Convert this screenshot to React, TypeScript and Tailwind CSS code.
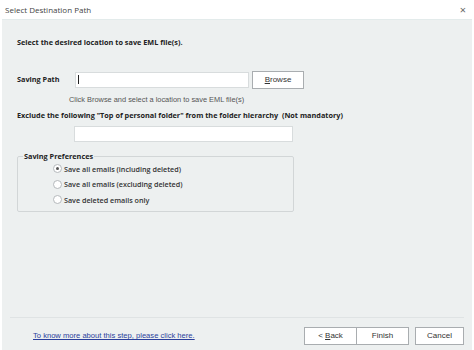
const RADIOS = [
  { label: "Save all emails (including deleted)", checked: true },
  { label: "Save all emails (excluding deleted)", checked: false },
  { label: "Save deleted emails only", checked: false },
];

const Radio = ({ checked }: { checked: boolean }) => (
  <span className="flex h-[9px] w-[9px] items-center justify-center rounded-full border border-[#b5b9bc] bg-white">
    {checked && <span className="h-[3px] w-[3px] rounded-full bg-[#555]" />}
  </span>
);

const Btn = ({ children, className = "" }: { children: React.ReactNode; className?: string }) => (
  <button
    className={`flex h-[18px] items-center justify-center border border-[#a9adb0] bg-white font-['Liberation_Sans',sans-serif] text-[8px] text-[#333] ${className}`}
  >
    {children}
  </button>
);

export default function App() {
  return (
    <div className="flex h-[350px] w-[474px] flex-col bg-white font-['Open_Sans',sans-serif] text-[#222]">
      <div className="flex h-[19px] items-center justify-between pl-[5px] pr-[8px]">
        <span className="text-[8px] text-[#444]">Select Destination Path</span>
        <span className="text-[11px] leading-none text-[#666]">×</span>
      </div>
      <div className="mx-[2px] flex flex-1 flex-col border-t border-[#e3ebeb] bg-[#edf0f0] px-[8px] pb-[5px]">
        <div className="flex flex-col pl-[7px]">
          <p className="mt-[17px] text-[7.3px] font-bold">Select the desired location to save EML file(s).</p>

          <div className="mt-[23px] flex items-center">
            <span className="w-[58px] text-[7.3px] font-bold">Saving Path</span>
            <div className="flex h-[16px] w-[174px] items-center border border-[#d8dcdd] bg-white pl-[2px]">
              <span className="h-[9px] w-px bg-[#222]" />
            </div>
            <Btn className="ml-[3px] w-[52px]">
              <span><span className="underline">B</span>rowse</span>
            </Btn>
          </div>
          <p className="mt-[5px] pl-[52px] font-['Liberation_Sans',sans-serif] text-[7.4px] text-[#555]">
            Click Browse and select a location to save EML file(s)
          </p>
          <p className="mt-[5px] text-[7.3px] font-bold">
            Exclude the following "Top of personal folder" from the folder hierarchy&nbsp; (Not mandatory)
          </p>
          <div className="ml-[57px] mt-[5px] h-[16px] w-[219px] border border-[#d8dcdd] bg-white" />

          <fieldset className="mt-[9px] h-[61px] w-[277px] rounded-[2px] border border-[#d2d6d7] px-[5px]">
            <legend className="px-[1px] text-[7.3px] font-bold">Saving Preferences</legend>
            <div className="flex flex-col gap-[5.5px] pl-[30px] pt-[2px]">
              {RADIOS.map((r) => (
                <label key={r.label} className="flex items-center gap-[2px] text-[7.2px] leading-[10px] font-semibold text-[#333]">
                  <Radio checked={r.checked} />
                  {r.label}
                </label>
              ))}
            </div>
          </fieldset>
        </div>

        <div className="mt-auto border-t border-[#dfe3e4]" />
        <div className="flex items-center pt-[9px]">
          <a className="ml-[23px] font-['Liberation_Sans',sans-serif] text-[7.6px] text-[#2a3f9c] underline">
            To know more about this step, please click here.
          </a>
          <div className="ml-auto flex">
            <Btn className="w-[53px]">
              <span>&lt; <span className="underline">B</span>ack</span>
            </Btn>
            <Btn className="w-[52px] border-l-0">Finish</Btn>
            <Btn className="ml-[6px] w-[49px]">Cancel</Btn>
          </div>
        </div>
      </div>
    </div>
  );
}
